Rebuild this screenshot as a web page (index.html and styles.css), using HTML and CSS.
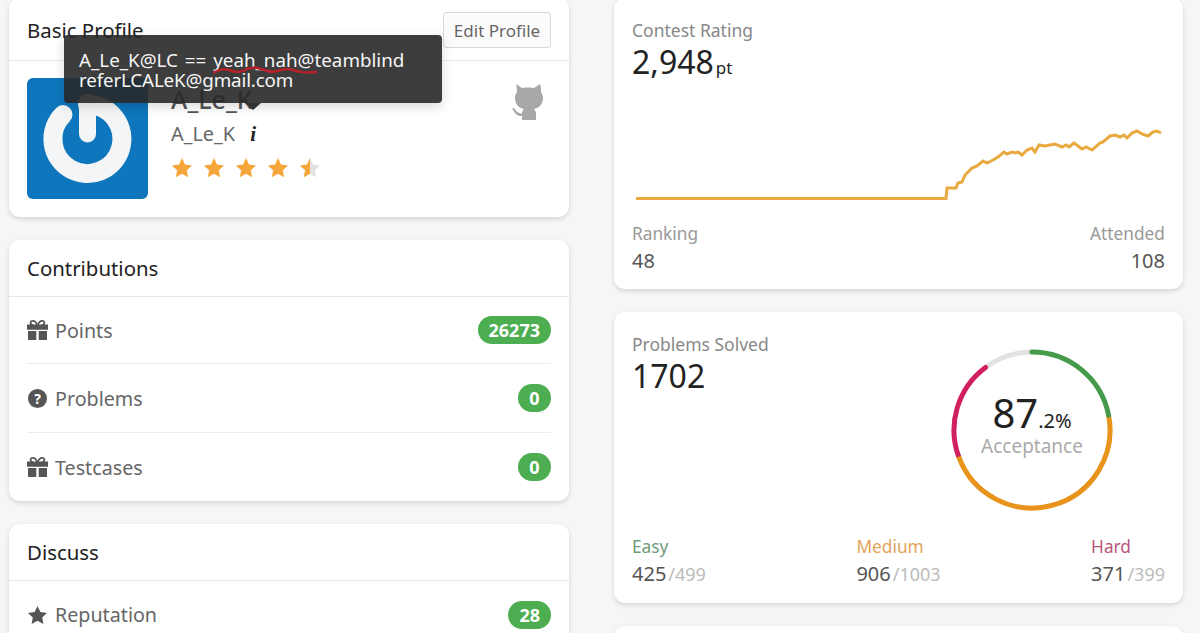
FILE: index.html
```html
<!DOCTYPE html>
<html lang="en">
<head>
  <meta charset="UTF-8" />
  <title>A_Le_K - Profile</title>
  <link rel="stylesheet" href="styles.css">
</head>
<body>
  <div class="page">
    <div class="col col-left">
      <div class="card profile-card">
        <div class="card-head">
          <h3>Basic Profile</h3>
          <button class="edit-btn">Edit Profile</button>
        </div>
        <div class="profile-body">
          <svg class="avatar" viewBox="0 0 121 121">
            <rect width="121" height="121" rx="6" fill="#0e76bc"/>
            <path d="M36 36.600 A34.500 34.500 0 1 0 60.500 26.500" fill="none" stroke="#f4f5f7" stroke-width="19" stroke-linecap="round"/>
            <path d="M60.500 24 V56" fill="none" stroke="#f4f5f7" stroke-width="17" stroke-linecap="round"/>
          </svg>
          <div class="profile-info">
            <div class="real-name">A_Le_K</div>
            <div class="user-name">A_Le_K <span class="info-i">i</span></div>
            <div class="stars">
              <svg viewBox="0 0 20 20"><path class="star-on" d="M10 0l3 6.500 7 .9-5.100 4.800 1.300 7L10 15.800l-6.200 3.400 1.300-7L0 7.400l7-.9z"/></svg>
              <svg viewBox="0 0 20 20"><path class="star-on" d="M10 0l3 6.500 7 .9-5.100 4.800 1.300 7L10 15.800l-6.200 3.400 1.300-7L0 7.400l7-.9z"/></svg>
              <svg viewBox="0 0 20 20"><path class="star-on" d="M10 0l3 6.500 7 .9-5.100 4.800 1.300 7L10 15.800l-6.200 3.400 1.300-7L0 7.400l7-.9z"/></svg>
              <svg viewBox="0 0 20 20"><path class="star-on" d="M10 0l3 6.500 7 .9-5.100 4.800 1.300 7L10 15.800l-6.200 3.400 1.300-7L0 7.400l7-.9z"/></svg>
              <svg viewBox="0 0 20 20"><path class="star-off" d="M10 0l3 6.500 7 .9-5.100 4.800 1.300 7L10 15.800l-6.200 3.400 1.300-7L0 7.400l7-.9z"/><path class="star-on" d="M10 0v15.800l-6.200 3.400 1.300-7L0 7.400l7-.9z"/></svg>
            </div>
          </div>
          <svg class="github" viewBox="0 0 32 38">
            <path d="M4 1l6 4c3-.8 9-.8 12 0l6-4c1 3 1.200 6 1 8 1.500 2 2 4 2 6.500 0 5.500-4 9.500-9 10.500 1.500 1.500 2 3 2 5v6H10v-4c-4 .5-7-2-8.500-5.500L0 26l2-1c2 3 4 5.500 8 5.500 0-1.500.5-3 2-4.500-5-1-9-5-9-10.500 0-2.500.5-4.500 2-6.500-.2-2 0-5-1-8z"/>
          </svg>
        </div>
      </div>

      <div class="card">
        <div class="card-head"><h3>Contributions</h3></div>
        <ul class="stat-list">
          <li>
            <span class="stat-label">
              <svg class="gift" viewBox="0 0 21 20"><path d="M6 0c2 0 3.600 1.500 4.500 3.600C11.400 1.500 13 0 15 0c2 0 3.300 1.100 3.300 2.800 0 .7-.2 1.300-.6 1.800H21v5.200H0V4.600h3.300c-.4-.5-.6-1.100-.6-1.800C2.700 1.100 4 0 6 0zm0 1.800c-1 0-1.500.4-1.500 1 0 1 1 1.800 4.500 1.800C8.300 2.800 7.200 1.800 6 1.800zm9 0c-1.200 0-2.300 1-3 2.800 3.500 0 4.500-.8 4.500-1.800 0-.6-.5-1-1.500-1zM1 11h8.300v9H1zm10.700 0H20v9h-8.300z"/></svg>
              Points
            </span>
            <span class="badge">26273</span>
          </li>
          <li>
            <span class="stat-label"><span class="q-icon">?</span> Problems</span>
            <span class="badge">0</span>
          </li>
          <li>
            <span class="stat-label">
              <svg class="gift" viewBox="0 0 21 20"><path d="M6 0c2 0 3.600 1.500 4.500 3.600C11.400 1.500 13 0 15 0c2 0 3.300 1.100 3.300 2.800 0 .7-.2 1.300-.6 1.800H21v5.200H0V4.600h3.300c-.4-.5-.6-1.100-.6-1.800C2.700 1.100 4 0 6 0zm0 1.800c-1 0-1.500.4-1.500 1 0 1 1 1.800 4.500 1.800C8.300 2.800 7.200 1.800 6 1.800zm9 0c-1.200 0-2.300 1-3 2.800 3.500 0 4.500-.8 4.500-1.800 0-.6-.5-1-1.500-1zM1 11h8.300v9H1zm10.700 0H20v9h-8.300z"/></svg>
              Testcases
            </span>
            <span class="badge">0</span>
          </li>
        </ul>
      </div>

      <div class="card">
        <div class="card-head"><h3>Discuss</h3></div>
        <ul class="stat-list">
          <li>
            <span class="stat-label">
              <svg class="gift" viewBox="0 0 21 20"><path d="M10.500 1l2.900 6 6.600.9-4.800 4.600 1.200 6.500-5.900-3.200L4.600 19l1.200-6.500L1 7.900 7.600 7z"/></svg>
              Reputation
            </span>
            <span class="badge">28</span>
          </li>
        </ul>
      </div>
    </div>

    <div class="col col-right">
      <div class="card rating-card">
        <div class="panel-title">Contest Rating</div>
        <div class="big-num">2,948<small>pt</small></div>
        <svg class="chart" viewBox="632 82 533 130">
          <polyline points="636,198.500 946,198.500 947,188 956,188 958,183 962,182 965,175 972,168 977,166 983,161 987,163 993,160 998,157 1004,152 1007,154 1012,152 1015,153 1018,152 1022,155 1027,150 1032,148 1035,152 1039,145 1045,146 1055,144 1062,147 1066,145 1069,147 1074,143 1082,149 1086,147 1092,150 1100,143 1103,142 1110,136 1115,135 1120,137 1124,135 1127,138 1132,133 1137,131 1142,134 1148,136 1153,132 1157,131 1161,133"/>
        </svg>
        <div class="split-row">
          <div><div class="small-label">Ranking</div><div class="small-val">48</div></div>
          <div class="align-right"><div class="small-label">Attended</div><div class="small-val">108</div></div>
        </div>
      </div>

      <div class="card solved-card">
        <div class="solved-top">
          <div>
            <div class="panel-title">Problems Solved</div>
            <div class="big-num">1702</div>
          </div>
          <div class="ring">
            <svg viewBox="0 0 164 164">
              <path d="M35.500 19.400 A78 78 0 0 1 82 4" stroke="#e2e2e2"/>
              <path d="M8.700 108.680 A78 78 0 0 1 35.500 19.400" stroke="#d02060" stroke-linecap="round"/>
              <path d="M158.570 67.120 A78 78 0 0 1 8.700 108.680" stroke="#e8931c"/>
              <path d="M82 4 A78 78 0 0 1 158.570 67.120" stroke="#459a4c" stroke-linecap="round"/>
            </svg>
            <div class="ring-text">
              <div class="ring-num">87<small>.2%</small></div>
              <div class="ring-label">Acceptance</div>
            </div>
          </div>
        </div>
        <div class="split-row">
          <div><div class="small-label easy">Easy</div><div class="small-val">425<span class="of">/499</span></div></div>
          <div><div class="small-label medium">Medium</div><div class="small-val">906<span class="of">/1003</span></div></div>
          <div><div class="small-label hard">Hard</div><div class="small-val">371<span class="of">/399</span></div></div>
        </div>
      </div>

      <div class="card"></div>
    </div>
  </div>

  <div class="tooltip">
    A_Le_K@LC == yeah_nah@teamblind<br><span class="tip-mail">referLCALeK@gmail.com</span>
    <svg class="squiggle" viewBox="0 0 104 9"><path d="M0 7c6-3 10-5 16-3s10 3 16 0 10-3 16-1 10 4 16 2 10-3 16-1 10 3 24 2"/></svg>
  </div>
</body>
</html>
```

FILE: styles.css
```css
* {
  margin: 0;
  padding: 0;
  box-sizing: border-box;
}
html, body {
  height: 100%;
  overflow: hidden;
}
body {
  position: relative;
  background: #f6f6f6;
  font-family: "Noto Sans", "Open Sans", sans-serif;
  color: #555;
}
small { line-height: 1; }
.page {
  display: flex;
  gap: 45px;
  padding: 0 17px 0 9px;
  margin-top: -2px;
}
.col {
  display: flex;
  flex-direction: column;
  gap: 23px;
}
.col-left { width: 560px; }
.col-right { width: 569px; }
.card {
  background: #fff;
  border-radius: 11px;
  box-shadow: 0 2px 5px rgba(0,0,0,0.14);
  min-height: 60px;
}
.card-head {
  display: flex;
  align-items: center;
  justify-content: space-between;
  height: 57px;
  padding: 0 18px;
  border-bottom: 1px solid #e9e9e9;
}
.profile-card .card-head {
  height: 63px;
  padding-top: 2px;
}
.card-head h3 {
  font-size: 20.400px;
  font-weight: 400;
  color: #222;
}
.edit-btn {
  width: 108px;
  height: 36px;
  background: #fbfbfb;
  border: 1px solid #d8d8d8;
  border-radius: 3px;
  font: 17px "Noto Sans", sans-serif;
  color: #666;
}
.profile-body {
  display: flex;
  padding: 17px 25px 18px 18px;
}
.avatar {
  width: 121px;
  height: 121px;
}
.profile-info {
  flex: 1;
  padding-left: 23px;
}
.real-name {
  font-size: 25px;
  font-weight: 500;
  color: #555;
  line-height: 32px;
  margin-top: 5px;
}
.user-name {
  font-size: 19.800px;
  line-height: 28px;
  color: #666;
  margin-top: 5px;
}
.info-i {
  font: italic 700 21px "Liberation Serif", serif;
  color: #222;
  margin-left: 10px;
}
.stars {
  display: flex;
  gap: 12px;
  margin-top: 10px;
  padding-left: 1px;
}
.stars svg {
  width: 20px;
  height: 20px;
}
.star-on { fill: #f5a73b; }
.star-off { fill: #e2e2e2; }
.github {
  width: 32px;
  height: 38px;
  fill: #a8a8a8;
  margin-top: 5px;
}
.stat-list { list-style: none; }
.stat-list li {
  display: flex;
  align-items: center;
  justify-content: space-between;
  height: 68px;
  margin: 0 18px;
  border-bottom: 1px solid #ececec;
}
.stat-list li:first-child { height: 67px; }
.stat-list li:nth-child(2) { height: 69px; }
.stat-list li:last-child { border-bottom: none; }
.stat-label {
  display: flex;
  align-items: center;
  gap: 7px;
  font-size: 19.700px;
  color: #666;
}
.gift {
  width: 21px;
  height: 20px;
  fill: #555;
}
.q-icon {
  width: 19px;
  height: 19px;
  margin: 0 1px;
  border-radius: 50%;
  background: #555;
  color: #fff;
  font-size: 14px;
  font-weight: 700;
  line-height: 19px;
  text-align: center;
}
.badge {
  min-width: 33px;
  height: 28px;
  padding: 0 11px;
  border-radius: 14px;
  background: #4cae50;
  color: #fff;
  font-size: 18px;
  font-weight: 700;
  line-height: 28px;
  text-align: center;
}
.rating-card { padding: 20px 18px 14px; }
.solved-card { padding: 20px 18px 15px; }
.panel-title {
  font-size: 17.500px;
  line-height: 24px;
  color: #888;
}
.big-num {
  height: 40px;
  font-size: 32px;
  line-height: 40px;
  color: #222;
}
.big-num small {
  font-size: 17px;
  margin-left: 2px;
}
.chart {
  display: block;
  width: 533px;
  height: 130px;
  margin-bottom: 9px;
}
.chart polyline {
  fill: none;
  stroke: #e8a93f;
  stroke-width: 3;
}
.split-row {
  display: flex;
  justify-content: space-between;
}
.align-right { text-align: right; }
.small-label {
  font-size: 17.300px;
  line-height: 26px;
  color: #999;
}
.small-val {
  font-size: 20px;
  line-height: 28px;
  color: #555;
}
.of {
  font-size: 18px;
  color: #bbb;
  margin-left: 2px;
}
.easy { color: #6f9a7b; }
.medium { color: #e2a35a; }
.hard { color: #b8567c; }
.solved-top {
  display: flex;
  justify-content: space-between;
  height: 202px;
}
.ring {
  position: relative;
  width: 164px;
  height: 164px;
  margin: 16px 51px 0 0;
}
.ring svg {
  display: block;
  width: 100%;
  height: 100%;
}
.ring path {
  fill: none;
  stroke-width: 5;
}
.ring-text {
  position: absolute;
  top: 43px;
  left: 0;
  right: 0;
  text-align: center;
}
.ring-num {
  font-size: 40px;
  line-height: 43px;
  color: #222;
}
.ring-num small { font-size: 20px; }
.ring-label {
  font-size: 19px;
  line-height: 24px;
  color: #aaa;
}
.tooltip {
  position: absolute;
  left: 64px;
  top: 35px;
  width: 378px;
  height: 68px;
  padding: 15px 15px;
  border-radius: 4px;
  background: rgba(40,40,40,0.9);
  box-shadow: 0 4px 12px rgba(0,0,0,0.15);
  color: #f5f5f5;
  font-size: 18.800px;
  line-height: 20px;
  word-spacing: 2px;
}
.tooltip::after {
  content: "";
  position: absolute;
  left: 181px;
  bottom: -7px;
  border-top: 7px solid #333;
  border-left: 8px solid transparent;
  border-right: 8px solid transparent;
}
.tip-mail { letter-spacing: -0.15px; }
.squiggle {
  position: absolute;
  left: 149px;
  top: 31px;
  width: 104px;
  height: 9px;
  fill: none;
  stroke: #b8202a;
  stroke-width: 2.500;
}
```
